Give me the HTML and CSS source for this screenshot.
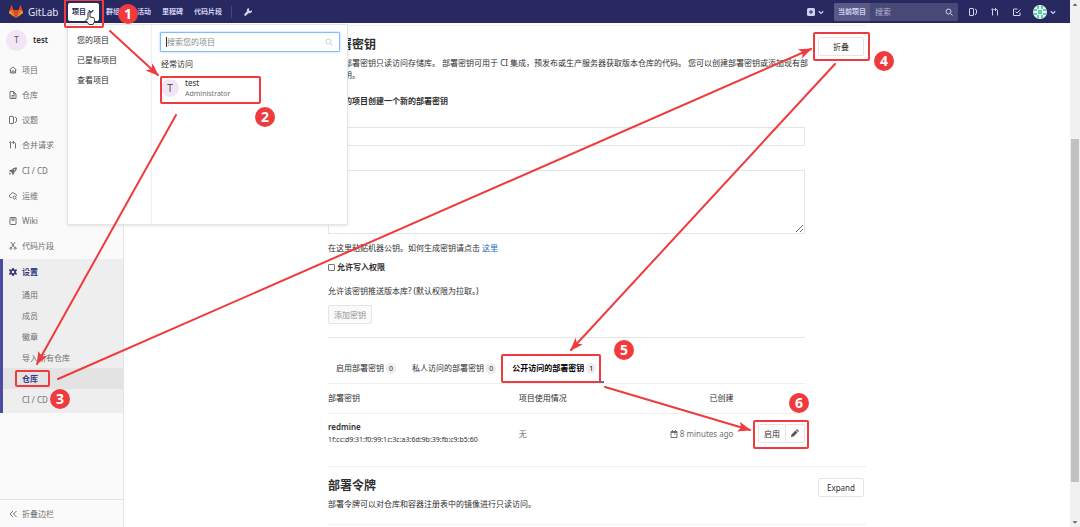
FILE: index.html
```html
<!DOCTYPE html>
<html lang="zh-CN">
<head>
    <meta charset="UTF-8">
    <meta name="viewport" content="width=device-width, initial-scale=1.0">
    <title>仓库设置 · test · GitLab</title>
    <link rel="stylesheet" href="styles.css">
</head>
<body>
    <div class="app">
        <!-- Top navigation bar -->
        <header class="navbar">
            <a class="brand" href="#">
                <svg class="logo" viewBox="0 0 28 26"><path fill="#e24329" d="M14 26 19.200 10H8.800z"/><path fill="#fc6d26" d="M14 26 8.800 10H1.500zM14 26 19.200 10h7.300z"/><path fill="#fca326" d="M1.500 10 0 15c-.2.600 0 1 .4 1.300L14 26zM26.500 10 28 15c.2.600 0 1-.4 1.300L14 26z"/><path fill="#e24329" d="M1.500 10h7.300L5.700.4c-.2-.5-.9-.5-1.100 0zM26.500 10h-7.300L22.300.4c.2-.5.900-.5 1.100 0z"/></svg>
                <span>GitLab</span>
            </a>
            <nav class="nav-links">
                <button class="nav-toggle" type="button">项目 <svg class="chevron" viewBox="0 0 8 8"><path d="M1 3l3 3 3-3"/></svg></button>
                <a href="#">群组<svg class="chevron" viewBox="0 0 8 8"><path d="M1 3l3 3 3-3"/></svg></a>
                <a href="#">活动</a>
                <a href="#">里程碑</a>
                <a href="#">代码片段</a>
                <a class="admin" href="#" aria-label="Admin"><svg class="icon solid" viewBox="0 0 16 16"><path d="M10 0a5 5 0 0 0-4 6.500L1 12a2 2 0 1 0 3 3l5.500-5A5 5 0 0 0 16 4l-3 2.500-3-2z"/></svg></a>
            </nav>
            <div class="nav-tools">
                <button class="tool" type="button" aria-label="New"><svg class="icon solid" viewBox="0 0 16 16"><path fill-rule="evenodd" d="M3 0h10a3 3 0 0 1 3 3v10a3 3 0 0 1-3 3H3a3 3 0 0 1-3-3V3a3 3 0 0 1 3-3zm4 4v3H4v2h3v3h2V9h3V7H9V4z"/></svg><svg class="chevron" viewBox="0 0 8 8"><path d="M1 3l3 3 3-3"/></svg></button>
                <form class="search">
                    <label for="search">当前项目</label>
                    <input type="text" id="search" placeholder="搜索">
                    <svg class="icon" viewBox="0 0 16 16"><circle cx="7" cy="7" r="5"/><path d="M11 11l4 4"/></svg>
                </form>
                <a href="#" aria-label="Issues"><svg class="icon" viewBox="0 0 16 16"><rect x="1" y="1" width="8" height="14" rx="1"/><path d="M12 2l3 2v6l-3 4"/></svg></a>
                <a href="#" aria-label="Merge requests"><svg class="icon" viewBox="0 0 16 16"><path d="M3 3v12M8 3h3q2 0 2 2v10M10 0L7 3l3 3"/><circle cx="3" cy="3" r="1.500"/></svg></a>
                <a href="#" aria-label="Todos"><svg class="icon" viewBox="0 0 16 16"><path d="M14 9v6H1V2h8M5 7l3 3 7-7"/></svg></a>
                <button class="tool user" type="button" aria-label="User"><svg class="identicon" viewBox="0 0 14 14"><circle cx="7" cy="7" r="7" fill="#f0f0f0"/><path fill="#55d6a8" d="M4 1h2v3H4zM8 1h2v3H8zM1 4h3v2H1zM10 4h3v2h-3zM5 5h4v4H5zM1 8h3v2H1zM10 8h3v2h-3zM4 10h2v3H4zM8 10h2v3H8z"/></svg><svg class="chevron" viewBox="0 0 8 8"><path d="M1 3l3 3 3-3"/></svg></button>
            </div>
        </header>

        <div class="page">
            <!-- Project sidebar -->
            <aside class="sidebar">
                <a class="project" href="#"><span class="avatar">T</span><strong>test</strong></a>
                <ul class="menu">
                    <li><a href="#"><svg class="icon" viewBox="0 0 16 16"><path d="M1 8l7-6 7 6M3 7v7h10V7M6 14v-4h4v4"/></svg>项目</a></li>
                    <li><a href="#"><svg class="icon" viewBox="0 0 16 16"><path d="M2 1h7l5 5v9H2zM9 1v5h5M5 9h6M5 12h6"/></svg>仓库</a></li>
                    <li><a href="#"><svg class="icon" viewBox="0 0 16 16"><rect x="1" y="1" width="8" height="14" rx="1"/><path d="M12 2l3 2v6l-3 4"/></svg>议题</a></li>
                    <li><a href="#"><svg class="icon" viewBox="0 0 16 16"><path d="M3 3v12M8 3h3q2 0 2 2v10M10 0L7 3l3 3"/><circle cx="3" cy="3" r="1.500"/></svg>合并请求</a></li>
                    <li><a href="#"><svg class="icon solid" viewBox="0 0 16 16"><path fill-rule="evenodd" d="M16 1c-5 0-8 1-10 4L2 6 0 9l4 1 2 2 1 4 3-2 1-4c3-2 5-4 5-9zm-5 3a1.500 1.500 0 1 1 0 3 1.500 1.500 0 0 1 0-3zM0 15l1-4 4 3z"/></svg>CI / CD</a></li>
                    <li><a href="#"><svg class="icon" viewBox="0 0 16 16"><path d="M5 11H4a3 3 0 0 1-1-6 5 5 0 0 1 9-1 3 3 0 0 1 3 4"/><circle cx="11" cy="11" r="3"/><path d="M11 11h.1M13 13l2 2"/></svg>运维</a></li>
                    <li><a href="#"><svg class="icon" viewBox="0 0 16 16"><rect x="2" y="1" width="12" height="14" rx="1"/><path d="M6 1v6l2-1 2 1V1"/></svg>Wiki</a></li>
                    <li><a href="#"><svg class="icon" viewBox="0 0 16 16"><path d="M4 0l7 11M12 0L5 11"/><circle cx="3.500" cy="12.500" r="2"/><circle cx="12.500" cy="12.500" r="2"/></svg>代码片段</a></li>
                </ul>
                <div class="menu-open">
                    <a class="menu-title" href="#"><svg class="icon solid" viewBox="0 0 16 16"><path fill-rule="evenodd" d="M6.500 0h3l.5 2.500 2 1L14.500 2l1.500 3-2 2v2l2 2-1.500 3-2.500-1.500-2 1-.5 2.500h-3L6 13.500l-2-1L1.500 14 0 11l2-2V7L0 5l1.500-3L4 3.500l2-1zM8 5.500a2.500 2.500 0 1 0 0 5 2.500 2.500 0 0 0 0-5z"/></svg>设置</a>
                    <ul class="submenu">
                        <li><a href="#">通用</a></li>
                        <li><a href="#">成员</a></li>
                        <li><a href="#">徽章</a></li>
                        <li><a href="#">导入所有仓库</a></li>
                        <li><a class="active" href="#">仓库</a></li>
                        <li><a href="#">CI / CD</a></li>
                    </ul>
                </div>
                <button class="collapse" type="button"><svg class="icon" viewBox="0 0 16 16"><path d="M8 2L2 8l6 6M15 2L9 8l6 6"/></svg>折叠边栏</button>
            </aside>

            <!-- Repository settings -->
            <main class="content">
                <section class="settings">
                    <div class="settings-header">
                        <div class="settings-text">
                            <h4>部署密钥</h4>
                            <p>允许部署密钥只读访问存储库。 部署密钥可用于 CI 集成，预发布或生产服务器获取版本仓库的代码。 您可以创建部署密钥或添加现有部署密钥。</p>
                        </div>
                        <button class="btn toggle" type="button">折叠</button>
                    </div>
                    <div class="settings-body">
                        <form>
                            <h5>为您的项目创建一个新的部署密钥</h5>
                            <div class="form-group">
                                <label for="key-title">标题</label>
                                <input type="text" id="key-title">
                            </div>
                            <div class="form-group">
                                <label for="key-body">密钥</label>
                                <textarea id="key-body"></textarea>
                            </div>
                            <p>在这里粘贴机器公钥。如何生成密钥请点击 <a class="link" href="#">这里</a></p>
                            <div class="check">
                                <input type="checkbox" id="can-push">
                                <label for="can-push">允许写入权限</label>
                            </div>
                            <p class="hint">允许该密钥推送版本库? (默认权限为拉取。)</p>
                            <button class="btn" type="submit" disabled>添加密钥</button>
                        </form>
                        <hr>
                        <nav class="tabs">
                            <a href="#">启用部署密钥 <span class="badge">0</span></a>
                            <a href="#">私人访问的部署密钥 <span class="badge">0</span></a>
                            <a class="active" href="#">公开访问的部署密钥 <span class="badge">1</span></a>
                        </nav>
                        <table class="keys">
                            <thead>
                                <tr>
                                    <th class="col-key">部署密钥</th>
                                    <th class="col-usage">项目使用情况</th>
                                    <th class="col-created">已创建</th>
                                    <th class="col-actions"></th>
                                </tr>
                            </thead>
                            <tbody>
                                <tr>
                                    <td><strong>redmine</strong><span class="fingerprint">1f:cc:d9:31:f0:99:1c:3c:a3:6d:9b:39:fb:c9:b5:60</span></td>
                                    <td class="muted">无</td>
                                    <td class="col-created muted"><svg class="icon" viewBox="0 0 16 16"><path d="M2 3h12v12H2zM2 5h12M5 0v4M11 0v4M8 8h3"/></svg> 8 minutes ago</td>
                                    <td>
                                        <div class="btn-group">
                                            <button class="btn" type="button">启用</button>
                                            <button class="btn" type="button" aria-label="Edit"><svg class="icon solid" viewBox="0 0 16 16"><path d="M0 16l1-5 8-8 4 4-8 8zM10 2l2-2 4 4-2 2z"/></svg></button>
                                        </div>
                                    </td>
                                </tr>
                            </tbody>
                        </table>
                    </div>
                </section>

                <section class="settings">
                    <div class="settings-header">
                        <div class="settings-text">
                            <h4>部署令牌</h4>
                            <p>部署令牌可以对仓库和容器注册表中的镜像进行只读访问。</p>
                        </div>
                        <button class="btn toggle" type="button">Expand</button>
                    </div>
                </section>
                <section class="settings"></section>
            </main>
        </div>
    </div>

    <div class="scrollbar">
        <svg viewBox="0 0 10 10"><path d="M2 6l3-3 3 3z"/></svg>
        <div class="thumb"></div>
        <svg viewBox="0 0 10 10"><path d="M2 4l3 3 3-3z"/></svg>
    </div>

    <!-- Projects dropdown -->
    <div class="dropdown">
        <ul class="dropdown-links">
            <li><a href="#">您的项目</a></li>
            <li><a href="#">已星标项目</a></li>
            <li><a href="#">查看项目</a></li>
        </ul>
        <div class="dropdown-main">
            <div class="project-search">
                <input type="text" placeholder="搜索您的项目" aria-label="搜索您的项目">
                <svg class="icon" viewBox="0 0 16 16"><circle cx="7" cy="7" r="5"/><path d="M11 11l4 4"/></svg>
            </div>
            <div class="frequent">经常访问</div>
            <a class="frequent-item" href="#">
                <span class="avatar">T</span>
                <span>test<small>Administrator</small></span>
            </a>
        </div>
    </div>

    <!-- Numbered steps drawn over the page -->
    <svg class="steps">
        <defs>
            <marker id="head" markerUnits="userSpaceOnUse" markerWidth="14" markerHeight="10" refX="12" refY="5" orient="auto"><path d="M0 0L13 5 0 10 3 5z"/></marker>
        </defs>
        <g class="boxes">
            <rect x="65" y="0" width="38" height="27" rx="1"/>
            <rect x="161" y="77" width="99" height="26" rx="1"/>
            <rect x="16" y="371" width="33" height="15" rx="1"/>
            <rect x="814" y="33" width="55" height="27" rx="1"/>
            <rect x="502" y="355" width="98" height="27" rx="1"/>
            <rect x="754" y="421" width="54" height="27" rx="1"/>
        </g>
        <g class="arrows">
            <path d="M110 31L158 75"/>
            <path d="M176 115L37 364"/>
            <path d="M58 379L811 49"/>
            <path d="M835 64L571 350"/>
            <path d="M605 387L750 430"/>
        </g>
        <g class="dots">
            <circle cx="128" cy="14" r="10"/><text x="128" y="19">1</text>
            <circle cx="265" cy="117" r="10"/><text x="265" y="122">2</text>
            <circle cx="60" cy="399" r="10"/><text x="60" y="404">3</text>
            <circle cx="884" cy="61" r="10"/><text x="884" y="66">4</text>
            <circle cx="624" cy="350" r="10"/><text x="624" y="355">5</text>
            <circle cx="799" cy="403" r="10"/><text x="799" y="408">6</text>
        </g>
    </svg>
    <svg class="cursor" viewBox="0 0 10 14"><path d="M3 8V2q0-1 1-1t1 1v4l3 .5q1.500.3 1.500 2V11L8 13.500H4L1 9.500q-.5-1 .5-1.200z"/></svg>
</body>
</html>
```

FILE: styles.css
```css
* {
    box-sizing: border-box;
}
body {
    margin: 0;
    height: 100vh;
    display: flex;
    position: relative;
    overflow: hidden;
    font-family: "Noto Sans", "Noto Sans CJK SC", sans-serif;
    font-size: 8px;
    line-height: 12px;
    color: #2e2e2e;
    background-color: white;
}
h4, h5, p, ul {
    margin: 0;
    padding: 0;
}
ul {
    list-style: none;
}
a {
    color: inherit;
    text-decoration: none;
}
button, input, textarea {
    font: inherit;
    color: inherit;
    margin: 0;
}
input::placeholder {
    color: #8c8c8c;
    opacity: 1;
}
.icon {
    width: 8px;
    height: 8px;
    flex: none;
    fill: none;
    stroke: currentColor;
    stroke-width: 2;
}
.icon.solid {
    fill: currentColor;
    stroke: none;
}
.chevron {
    width: 6px;
    height: 6px;
    fill: none;
    stroke: currentColor;
    stroke-width: 1.5;
}
.app {
    flex: 1;
    min-width: 0;
    display: flex;
    flex-direction: column;
}

/* Navbar */
.navbar {
    height: 23px;
    flex: none;
    display: flex;
    align-items: center;
    padding: 0 14px 0 9px;
    background-color: #292961;
    color: #d1d1f0;
    font-size: 7px;
}
.brand {
    display: flex;
    align-items: center;
    gap: 5px;
    width: 59px;
    font-size: 10px;
    color: #e4e4f5;
}
.logo {
    width: 14px;
    height: 13px;
}
.nav-links {
    display: flex;
    align-items: center;
    font-weight: 600;
}
.nav-links a {
    padding: 0 5px 0 6px;
}
.nav-toggle {
    width: 31px;
    height: 18px;
    margin-right: 1px;
    padding: 0 4px;
    border: none;
    border-radius: 2px;
    background-color: white;
    color: #292961;
    text-align: left;
    white-space: nowrap;
}
.nav-links .admin {
    display: flex;
    margin-left: 4px;
    padding: 2px 0 2px 12px;
    border-left: 1px solid #45457c;
}
.nav-tools {
    display: flex;
    align-items: center;
    gap: 14px;
    margin-left: auto;
}
.nav-tools a {
    display: flex;
}
.tool {
    display: flex;
    align-items: center;
    gap: 3px;
    padding: 0;
    border: none;
    background: none;
}
.user {
    margin-left: -2px;
}
.identicon {
    width: 14px;
    height: 14px;
}
.search {
    display: flex;
    align-items: center;
    width: 124px;
    height: 18px;
    padding-right: 5px;
    margin: 0 -3px 0 -4px;
    border-radius: 2px;
    background-color: #494978;
}
.search label {
    padding: 3px 4px;
    border-radius: 2px 0 0 2px;
    background-color: #5a5a87;
    font-weight: 600;
}
.search input {
    flex: 1;
    min-width: 0;
    padding: 0 5px;
    border: none;
    background: none;
    font-size: 8px;
}
.search input::placeholder {
    color: #b4b4d6;
}

/* Sidebar */
.page {
    flex: 1;
    min-height: 0;
    display: flex;
}
.sidebar {
    width: 124px;
    flex: none;
    display: flex;
    flex-direction: column;
    border-right: 1px solid #e5e5e5;
    background-color: #fafafa;
    color: #707070;
}
.project {
    display: flex;
    align-items: center;
    gap: 6px;
    height: 34px;
    padding-left: 6px;
    color: #2e2e2e;
}
.project strong {
    font-weight: 600;
}
.avatar {
    display: flex;
    align-items: center;
    justify-content: center;
    width: 21px;
    height: 21px;
    border-radius: 50%;
    background-color: #f3e5f5;
    color: #555;
}
.menu {
    display: grid;
    height: 202px;
}
.menu li {
    display: flex;
}
.menu a, .menu-title, .collapse {
    display: flex;
    align-items: center;
    gap: 5px;
    padding-left: 9px;
}
.menu-open {
    padding-bottom: 3px;
    border-left: 3px solid #4b4ba3;
    background-color: #eee;
}
.menu-title {
    height: 25px;
    padding-left: 6px;
    font-weight: 600;
    color: #393982;
}
.submenu a {
    display: block;
    padding-left: 19px;
    line-height: 21px;
}
.submenu .active {
    background-color: #e3e3e3;
    font-weight: 600;
    color: #393982;
}
.collapse {
    height: 28px;
    margin-top: auto;
    border: none;
    border-top: 1px solid #e5e5e5;
    background: none;
}

/* Settings content */
.content {
    flex: 1;
    padding-top: 2px;
}
.settings {
    max-width: 538px;
    margin: 0 auto;
    border-top: 1px solid #eee;
}
.settings-header {
    display: flex;
    align-items: flex-start;
    padding-top: 11px;
}
.settings-text {
    flex: 1;
    padding-right: 7px;
}
.settings h4 {
    margin-bottom: 4px;
    font-size: 12px;
    line-height: 16px;
}
.settings-text p {
    margin-bottom: 14px;
}
.btn {
    height: 19px;
    padding: 0 5px;
    border: 1px solid #e5e5e5;
    border-radius: 2px;
    background-color: white;
    line-height: 12px;
}
.btn:disabled {
    background-color: #fafafa;
    color: #919191;
}
.toggle {
    width: 46px;
    margin-right: 2px;
}
.settings-body {
    padding-right: 61px;
}
.settings h5 {
    margin-bottom: 4px;
    font-size: 8px;
    line-height: 12px;
    font-weight: 600;
}
.form-group {
    display: flex;
    flex-direction: column;
    gap: 4px;
    margin-bottom: 8px;
    font-weight: 600;
}
.form-group input, .form-group textarea {
    width: 100%;
    height: 19px;
    border: 1px solid #e5e5e5;
}
.form-group textarea {
    height: 64px;
}
.link {
    color: #1b69b6;
}
.check {
    display: flex;
    align-items: center;
    gap: 2px;
    margin-top: 7px;
    font-weight: 600;
}
.check input {
    appearance: none;
    width: 7px;
    height: 7px;
    border: 1px solid #767676;
    border-radius: 1px;
}
.check input:checked {
    background-color: #1b69b6;
}
.hint {
    margin: 12px 0 8px;
}
hr {
    margin: 13px 0 15px;
    border: none;
    border-top: 1px solid #e5e5e5;
}
.tabs {
    display: flex;
    border-bottom: 1px solid #eee;
}
.tabs a {
    padding: 9px 8px 7px;
    border-bottom: 2px solid transparent;
}
.tabs .active {
    border-color: #6666c4;
    font-weight: 600;
    color: black;
}
.badge {
    display: inline-block;
    padding: 0 3px;
    border-radius: 5px;
    background-color: #eee;
    font-size: 7px;
    line-height: 11px;
    font-weight: 400;
}
.keys {
    width: 100%;
    table-layout: fixed;
    border-collapse: collapse;
}
.keys th, .keys td {
    padding: 0;
    text-align: left;
    font-weight: 400;
}
.keys th {
    height: 29px;
    border-bottom: 1px solid #eee;
}
.keys td {
    height: 53px;
    padding-bottom: 12px;
    white-space: nowrap;
}
.keys strong {
    display: block;
    font-weight: 600;
}
.fingerprint {
    font-size: 7px;
}
.keys .muted {
    color: #707070;
}
.col-key {
    width: 40%;
}
.col-usage {
    width: 29%;
}
.col-actions {
    width: 15%;
}
.keys .col-created {
    text-align: right;
}
.col-created .icon {
    vertical-align: -1px;
}
.btn-group {
    display: flex;
    justify-content: flex-end;
}
.btn-group .btn + .btn {
    margin-left: -1px;
    color: #555;
}

/* Scrollbar */
.scrollbar {
    width: 10px;
    display: flex;
    flex-direction: column;
    padding: 0 1px;
    background-color: #f1f1f1;
}
.scrollbar svg {
    height: 10px;
    fill: #505050;
}
.thumb {
    height: 65%;
    margin: auto 0 35px;
    background-color: #c1c1c1;
}

/* Projects dropdown */
.dropdown {
    position: absolute;
    top: 24px;
    left: 67px;
    display: flex;
    width: 281px;
    height: 201px;
    border: 1px solid #e5e5e5;
    border-radius: 0 0 2px 2px;
    background-color: white;
    box-shadow: 0 1px 3px rgba(0, 0, 0, 0.1);
}
.dropdown-links {
    width: 84px;
    padding: 5px 9px;
    border-right: 1px solid #eee;
    line-height: 20px;
}
.dropdown-main {
    flex: 1;
    padding: 7px 7px 7px 8px;
}
.project-search {
    display: flex;
    align-items: center;
    height: 20px;
    padding: 0 6px 0 5px;
    border: 1px solid #80bdff;
    border-radius: 1px;
    box-shadow: 0 0 2px #80bdff;
}
.project-search input {
    flex: 1;
    min-width: 0;
    padding: 0;
    border: none;
    border-left: 1px solid #333;
    outline: none;
    line-height: 10px;
}
.project-search .icon {
    color: #ccc;
}
.frequent {
    padding: 6px 0 7px 1px;
}
.frequent-item {
    display: flex;
    align-items: center;
    gap: 6px;
    padding-left: 1px;
    line-height: 11px;
}
.frequent-item .avatar {
    width: 18px;
    height: 18px;
    font-size: 10px;
}
.frequent-item small {
    display: block;
    font-size: 7px;
    color: #707070;
}

/* Steps overlay */
.steps {
    position: absolute;
    top: 0;
    left: 0;
    width: 100%;
    height: 100%;
    pointer-events: none;
    fill: #ef3b3d;
}
.boxes rect {
    fill: none;
    stroke: #ef3b3d;
    stroke-width: 2;
}
.arrows path {
    stroke: #ef3b3d;
    stroke-width: 2;
    stroke-linecap: round;
    marker-end: url(#head);
}
.dots text {
    fill: white;
    font-size: 14px;
    font-weight: 700;
    text-anchor: middle;
}
.cursor {
    position: absolute;
    top: 11px;
    left: 85px;
    width: 10px;
    height: 14px;
    fill: white;
    stroke: #333;
}
```
